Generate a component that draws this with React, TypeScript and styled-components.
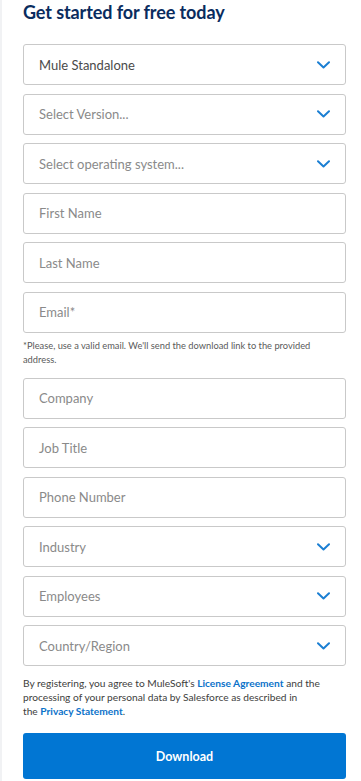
import styled, { createGlobalStyle } from 'styled-components';

const GlobalStyle = createGlobalStyle`
  html, body {
    margin: 0;
    padding: 0;
    background: #ffffff;
  }
  body {
    font-family: Lato, "Open Sans", "Liberation Sans", sans-serif;
  }
`;

type Field = { label: string; select?: boolean; filled?: boolean };

const topFields: Field[] = [
  { label: 'Mule Standalone', select: true, filled: true },
  { label: 'Select Version...', select: true },
  { label: 'Select operating system...', select: true },
  { label: 'First Name' },
  { label: 'Last Name' },
  { label: 'Email*' },
];

const bottomFields: Field[] = [
  { label: 'Company' },
  { label: 'Job Title' },
  { label: 'Phone Number' },
  { label: 'Industry', select: true },
  { label: 'Employees', select: true },
  { label: 'Country/Region', select: true },
];

const Chevron = () => (
  <svg width="13" height="8" viewBox="0 0 13 8" fill="none">
    <path d="M1 1.2L6.5 6.4L12 1.2" stroke="#1b7fd3" strokeWidth="2" strokeLinecap="round" strokeLinejoin="round" />
  </svg>
);

const FormField = ({ label, select, filled }: Field) => (
  <SField>
    <SLabel $filled={filled}>{label}</SLabel>
    {select && <Chevron />}
  </SField>
);

const App = () => {
  return (
    <SPage>
      <GlobalStyle />
      <STitle>Get started for free today</STitle>
      <SList>
        {topFields.map((f) => (
          <FormField key={f.label} {...f} />
        ))}
      </SList>
      <SNote>*Please, use a valid email. We'll send the download link to the provided address.</SNote>
      <SList>
        {bottomFields.map((f) => (
          <FormField key={f.label} {...f} />
        ))}
      </SList>
      <SLegal>
        By registering, you agree to MuleSoft's <SLink>License Agreement</SLink> and the processing of your
        personal data by Salesforce as described in
        <br />
        the <SLink>Privacy Statement</SLink>.
      </SLegal>
      <SButton>Download</SButton>
    </SPage>
  );
};

export default App;

const SPage = styled.div`
  display: flex;
  flex-direction: column;

  padding: 0 15px 0 21px;
  height: 781px;
  overflow: hidden;

  border-left: 2px solid #f1f2f4;
  box-sizing: border-box;
`;
const STitle = styled.h1`
  margin: 1px 0 21px;

  font-size: 18px;
  font-weight: 700;
  line-height: 22px;
  color: #0a2c5e;
  letter-spacing: -0.1px;
`;
const SList = styled.div`
  display: flex;
  flex-direction: column;
  gap: 8.5px;
`;
const SField = styled.div`
  display: flex;
  align-items: center;
  justify-content: space-between;

  height: 41px;
  padding: 0 15px 0 15px;

  border: 1px solid #c9c9c9;
  border-radius: 3px;
  box-sizing: border-box;
  background: #ffffff;
`;
const SLabel = styled.span<{ $filled?: boolean }>`
  font-size: 13px;
  color: ${({ $filled }) => ($filled ? '#4a4a4a' : '#8a8a8a')};
`;
const SNote = styled.p`
  margin: 6px 0 11px;

  font-size: 9.3px;
  line-height: 14px;
  color: #5a5a5a;
`;
const SLegal = styled.p`
  margin: 10px 0 15px;

  font-size: 10.2px;
  line-height: 14px;
  color: #3e3e3c;
`;
const SLink = styled.span`
  font-weight: 700;
  color: #0b72c9;
`;
const SButton = styled.button`
  height: 46px;
  flex-shrink: 0;

  border: none;
  border-radius: 3px;
  background: #0176d3;

  font-family: inherit;
  font-size: 12.5px;
  font-weight: 700;
  color: #ffffff;
`;
